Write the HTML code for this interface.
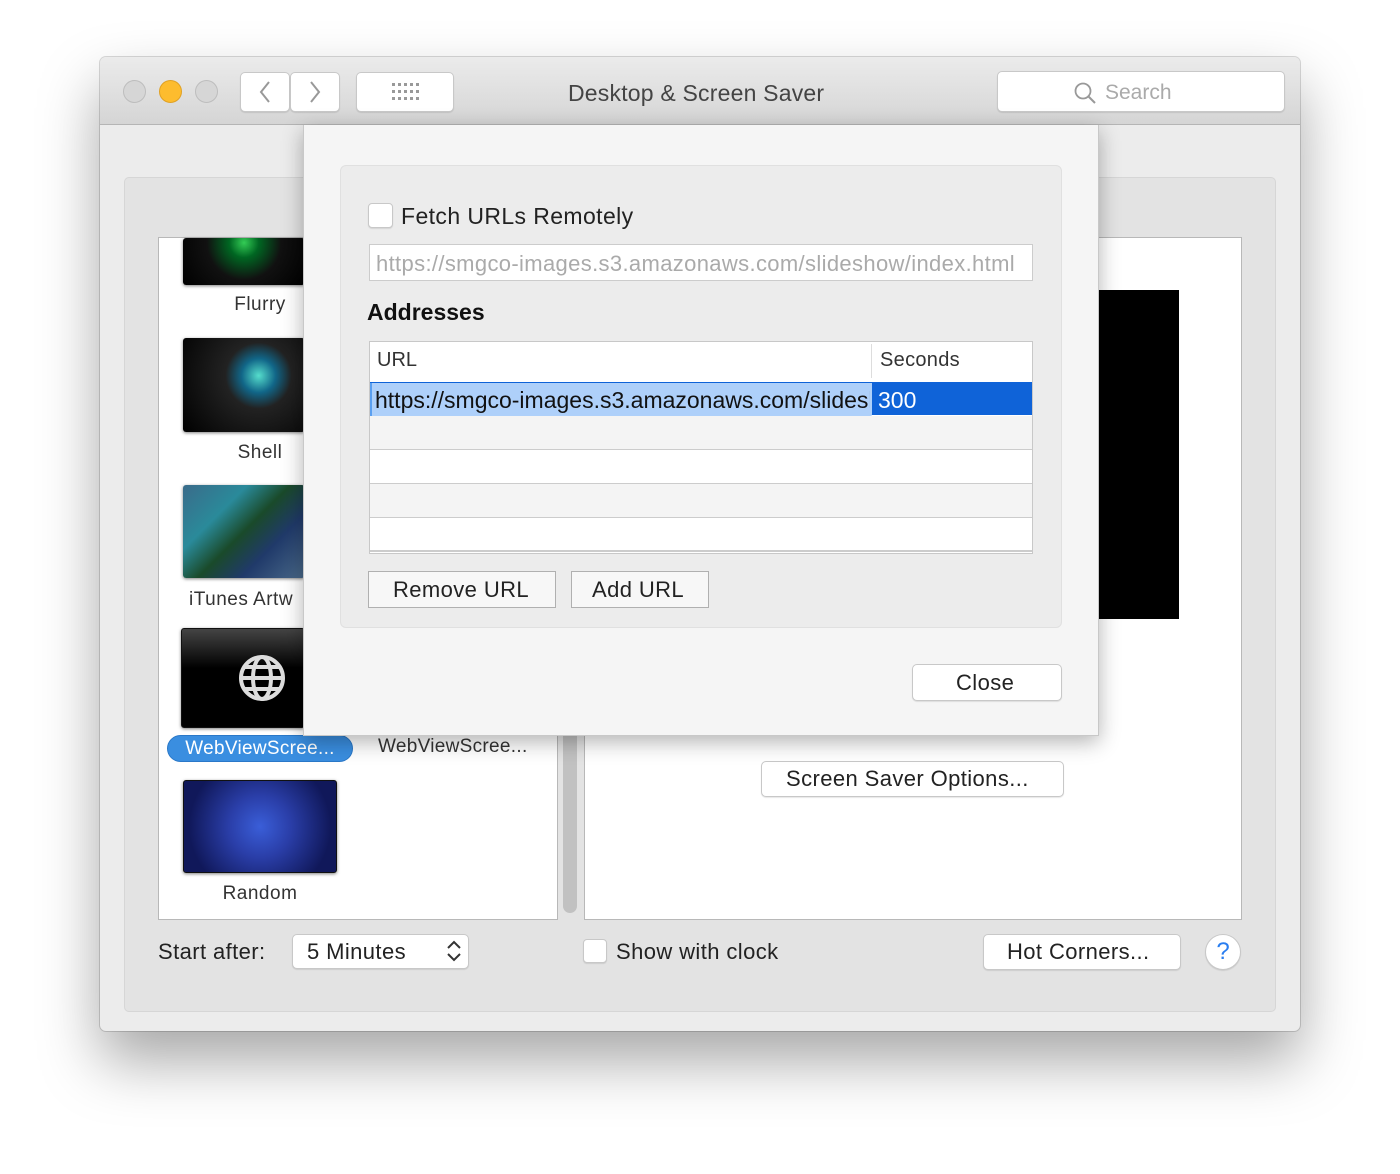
<!DOCTYPE html>
<html><head><style>
*{box-sizing:border-box;margin:0;padding:0}
body{width:1400px;height:1174px;background:#fff;font-family:"Liberation Sans",sans-serif;position:relative;overflow:hidden}
.a{position:absolute}
.win{left:100px;top:57px;width:1200px;height:974px;background:#ececec;border-radius:6px;box-shadow:0 30px 60px rgba(0,0,0,.35),0 0 0 1px rgba(0,0,0,.15);overflow:hidden}
.tb{left:0;top:0;width:1200px;height:68px;background:linear-gradient(#ebebeb,#d5d5d5);border-bottom:1px solid #b5b5b5}
.btn{background:#fff;border:1px solid #c8c8c8;border-radius:5px;box-shadow:0 1px 1px rgba(0,0,0,.1)}
.t{color:#222;font-size:22px;letter-spacing:.4px}
.thumb{border-radius:3px;box-shadow:0 1px 3px rgba(0,0,0,.5)}
.lbl{font-size:19px;color:#333;text-align:center;letter-spacing:.5px}
.sb{background:#f7f7f7;border:1px solid #b0b0b0}
</style></head><body>
<div class="a win">
 <div class="a tb"></div>
 <div class="a" style="left:23px;top:23px;width:23px;height:23px;border-radius:50%;background:#d6d6d6;border:1px solid #bdbdbd"></div>
 <div class="a" style="left:59px;top:23px;width:23px;height:23px;border-radius:50%;background:#fdbc2e;border:1px solid #e0a123"></div>
 <div class="a" style="left:95px;top:23px;width:23px;height:23px;border-radius:50%;background:#d6d6d6;border:1px solid #bdbdbd"></div>
 <div class="a btn" style="left:140px;top:15px;width:50px;height:40px"></div>
 <div class="a btn" style="left:190px;top:15px;width:50px;height:40px"></div>
 <svg class="a" style="left:155px;top:22px" width="20" height="26"><path d="M14 3 L6 13 L14 23" stroke="#999" stroke-width="2" fill="none"/></svg>
 <svg class="a" style="left:205px;top:22px" width="20" height="26"><path d="M6 3 L14 13 L6 23" stroke="#999" stroke-width="2" fill="none"/></svg>
 <div class="a btn" style="left:256px;top:15px;width:98px;height:40px"></div>
 <svg class="a" style="left:292px;top:26px" width="28" height="20"><g fill="#999"><rect x="0" y="0" width="3" height="3"/><rect x="6" y="0" width="3" height="3"/><rect x="12" y="0" width="3" height="3"/><rect x="18" y="0" width="3" height="3"/><rect x="24" y="0" width="3" height="3"/><rect x="0" y="7" width="3" height="3"/><rect x="6" y="7" width="3" height="3"/><rect x="12" y="7" width="3" height="3"/><rect x="18" y="7" width="3" height="3"/><rect x="24" y="7" width="3" height="3"/><rect x="0" y="14" width="3" height="3"/><rect x="6" y="14" width="3" height="3"/><rect x="12" y="14" width="3" height="3"/><rect x="18" y="14" width="3" height="3"/><rect x="24" y="14" width="3" height="3"/></g></svg>
 <div class="a" style="left:468px;top:23px;font-size:23px;color:#444;letter-spacing:.2px">Desktop &amp; Screen Saver</div>
 <div class="a btn" style="left:897px;top:14px;width:288px;height:41px"></div>
 <svg class="a" style="left:973px;top:24px" width="24" height="24"><circle cx="10" cy="10" r="7.5" stroke="#999" stroke-width="1.8" fill="none"/><path d="M15.5 15.5 L22 22" stroke="#999" stroke-width="2"/></svg>
 <div class="a" style="left:1005px;top:24px;font-size:21px;color:#aaa">Search</div>
 <div class="a" style="left:24px;top:120px;width:1152px;height:835px;background:#e3e3e3;border:1px solid #d6d6d6;border-radius:5px"></div>
 <div class="a" style="left:58px;top:180px;width:400px;height:683px;background:#fff;border:1px solid #b8b8b8"></div>
 <div class="a" style="left:463px;top:660px;width:14px;height:196px;background:#c1c1c1;border-radius:7px"></div>
 <div class="a" style="left:484px;top:180px;width:658px;height:683px;background:#fff;border:1px solid #b8b8b8"></div>
 <div class="a" style="left:999px;top:233px;width:80px;height:329px;background:#000"></div>
 <div class="a thumb" style="left:83px;top:181px;width:122px;height:47px;background:radial-gradient(circle at 50% 10%,#3c5 0,#062 20%,#111 50%,#000)"></div>
 <div class="a lbl" style="left:100px;top:237px;width:120px">Flurry</div>
 <div class="a thumb" style="left:83px;top:281px;width:122px;height:94px;background:radial-gradient(circle at 62% 40%,#5dc 0,#168 18%,#222 35%,#000)"></div>
 <div class="a lbl" style="left:100px;top:385px;width:120px">Shell</div>
 <div class="a thumb" style="left:83px;top:428px;width:122px;height:93px;background:linear-gradient(135deg,#3a6b8a,#2a8a9a 30%,#1a4a2a 50%,#203a6a 70%,#4a6a8a)"></div>
 <div class="a lbl" style="left:89px;top:532px;width:130px;text-align:left">iTunes Artw</div>
 <div class="a thumb" style="left:81px;top:571px;width:124px;height:100px;background:linear-gradient(#444,#000 40%);border:1px solid #111"></div>
 <svg class="a" style="left:137px;top:596px" width="50" height="50"><g stroke="#ddd" stroke-width="4" fill="none"><circle cx="25" cy="25" r="21"/><ellipse cx="25" cy="25" rx="9" ry="21"/><path d="M4 25H46M7 14H43M7 36H43"/></g></svg>
 <div class="a" style="left:67px;top:678px;width:186px;height:27px;background:#3a8ee0;border-radius:14px;border:1px solid #2a78c8;color:#fff;font-size:19px;text-align:center;line-height:25px;letter-spacing:.3px">WebViewScree...</div>
 <div class="a" style="left:278px;top:679px;font-size:19px;color:#333;letter-spacing:.3px">WebViewScree...</div>
 <div class="a thumb" style="left:83px;top:723px;width:154px;height:93px;background:radial-gradient(circle at 50% 50%,#3a5ed8 0,#2a3ea8 35%,#10185a 80%);border:1px solid #111"></div>
 <div class="a lbl" style="left:100px;top:826px;width:120px">Random</div>
 <div class="a t" style="left:58px;top:882px">Start after:</div>
 <div class="a btn" style="left:192px;top:877px;width:177px;height:35px"></div>
 <div class="a t" style="left:207px;top:882px">5 Minutes</div>
 <svg class="a" style="left:345px;top:881px" width="18" height="26"><path d="M3 10 L9 4 L15 10 M3 16 L9 22 L15 16" stroke="#333" stroke-width="2" fill="none"/></svg>
 <div class="a btn" style="left:483px;top:882px;width:24px;height:24px;border-radius:4px"></div>
 <div class="a t" style="left:516px;top:882px">Show with clock</div>
 <div class="a btn" style="left:883px;top:877px;width:198px;height:36px"></div>
 <div class="a t" style="left:907px;top:882px">Hot Corners...</div>
 <div class="a btn" style="left:1105px;top:877px;width:36px;height:36px;border-radius:50%;color:#2a7ef0;font-size:24px;text-align:center;line-height:34px">?</div>
 <div class="a btn" style="left:661px;top:704px;width:303px;height:36px"></div>
 <div class="a t" style="left:686px;top:709px">Screen Saver Options...</div>
 <div class="a" style="left:203px;top:68px;width:796px;height:611px;background:#f5f5f5;box-shadow:0 6px 20px rgba(0,0,0,.3);border:1px solid #c8c8c8;border-top:none"></div>
 <div class="a" style="left:240px;top:108px;width:722px;height:463px;background:#ececec;border:1px solid #e0e0e0;border-radius:6px"></div>
 <div class="a btn" style="left:268px;top:146px;width:25px;height:25px;border-radius:4px"></div>
 <div class="a t" style="left:301px;top:146px;font-size:23px">Fetch URLs Remotely</div>
 <div class="a" style="left:269px;top:187px;width:664px;height:37px;background:#fff;border:1px solid #ccc;overflow:hidden;white-space:nowrap;font-size:22px;color:#aaa;padding:6px 0 0 6px;letter-spacing:.35px">https://smgco-images.s3.amazonaws.com/slideshow/index.html</div>
 <div class="a" style="left:267px;top:242px;font-size:23px;font-weight:bold;color:#111">Addresses</div>
 <div class="a" style="left:269px;top:284px;width:664px;height:213px;background:#fff;border:1px solid #c8c8c8"></div>
 <div class="a" style="left:771px;top:287px;width:1px;height:34px;background:#ddd"></div>
 <div class="a" style="left:277px;top:292px;font-size:20px;color:#333">URL</div>
 <div class="a" style="left:780px;top:292px;font-size:20px;color:#333;letter-spacing:.3px">Seconds</div>
 <div class="a" style="left:270px;top:325px;width:662px;height:33px;background:#0f63d8"></div>
 <div class="a" style="left:270px;top:326px;width:502px;height:35px;background:#aed0fa;border-radius:0 0 4px 0;border-left:2px solid #5a9ff0"></div>
 <div class="a" style="left:275px;top:330px;width:495px;overflow:hidden;white-space:nowrap;font-size:23px;color:#111">https://smgco-images.s3.amazonaws.com/slideshow</div>
 <div class="a" style="left:778px;top:330px;font-size:23px;color:#fff">300</div>
 <div class="a" style="left:270px;top:359px;width:662px;height:34px;background:#f4f4f4;border-bottom:1px solid #ccc"></div>
 <div class="a" style="left:270px;top:393px;width:662px;height:34px;background:#fff;border-bottom:1px solid #ccc"></div>
 <div class="a" style="left:270px;top:427px;width:662px;height:34px;background:#f4f4f4;border-bottom:1px solid #ccc"></div>
 <div class="a" style="left:270px;top:461px;width:662px;height:34px;background:#fff;border-bottom:2px solid #ccc"></div>
 <div class="a sb" style="left:268px;top:514px;width:188px;height:37px"></div>
 <div class="a t" style="left:293px;top:520px">Remove URL</div>
 <div class="a sb" style="left:471px;top:514px;width:138px;height:37px"></div>
 <div class="a t" style="left:492px;top:520px">Add URL</div>
 <div class="a btn" style="left:812px;top:607px;width:150px;height:37px"></div>
 <div class="a t" style="left:856px;top:613px">Close</div>
</div>
</body></html>
